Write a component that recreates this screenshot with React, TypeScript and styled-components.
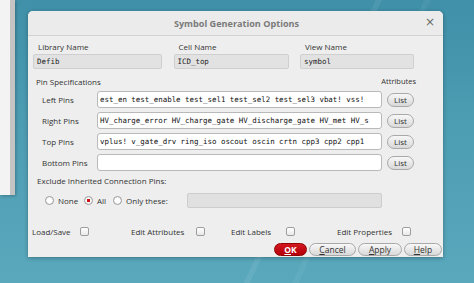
import React from "react";
import styled, { createGlobalStyle } from "styled-components";

const Global = createGlobalStyle`
  html, body { margin: 0; padding: 0; }
  body {
    width: 474px; height: 283px; overflow: hidden;
    font-family: "Open Sans", "Noto Sans", sans-serif;
  }
`;

const Desktop = styled.div`
  position: relative;
  width: 474px;
  height: 283px;
  overflow: hidden;
  background:
    linear-gradient(115deg, transparent 0 62%, rgba(255,255,255,0.07) 62% 63%, transparent 63% 70%, rgba(255,255,255,0.05) 70% 71%, transparent 71%),
    linear-gradient(180deg, #3f90a8 0%, #4d9db3 45%, #5aa8bc 100%);
`;

const BackWindow = styled.div`
  position: absolute;
  left: 0; top: 0;
  width: 10px; height: 195px;
  background: #f3f3f3;
  border-right: 5px solid #c4c4c4;
  box-shadow: 1px 1px 3px rgba(0,0,0,0.25);
`;

const Dialog = styled.div`
  position: absolute;
  left: 28px; top: 11px;
  width: 415px; height: 246px;
  background: #eeeeee;
  border-radius: 5px 5px 0 0;
  box-shadow: 0 1px 4px rgba(0,0,0,0.3);
  display: flex;
  flex-direction: column;
`;

const TitleBar = styled.div`
  position: relative;
  height: 24px;
  border-bottom: 1px solid #d2d2d2;
  display: flex;
  align-items: center;
  justify-content: center;
  background: #ebebeb;
  border-radius: 5px 5px 0 0;
`;

const Title = styled.span`
  font-weight: 700;
  font-size: 9.1px;
  color: #7a7a7a;
  margin-left: 2px;
`;

const Close = styled.span`
  position: absolute;
  right: 8px; top: 4px;
  font-size: 12px;
  color: #6a6a6a;
  font-family: "DejaVu Sans", sans-serif;
`;

const Body = styled.div`
  padding: 5px 29px 0 5px;
  display: flex;
  flex-direction: column;
`;

const NameRow = styled.div`
  display: flex;
  justify-content: space-between;
`;

const NameField = styled.div<{ $w: number }>`
  width: ${(p) => p.$w}px;
  display: flex;
  flex-direction: column;
  gap: 2px;
`;

const Label = styled.span<{ $size?: number }>`
  font-size: ${(p) => p.$size ?? 8}px;
  line-height: 11px;
  color: #333;
  white-space: nowrap;
`;

const NameLabel = styled(Label)`
  padding-left: 5px;
`;

const ReadOnlyInput = styled.div`
  height: 13px;
  background: #e2e2e2;
  border: 1px solid #cfcfcf;
  border-radius: 2px;
  font-family: "DejaVu Sans Mono", monospace;
  font-size: 7.45px;
  line-height: 13px;
  color: #222;
  padding-left: 3px;
`;

const SpecHeader = styled.div`
  margin-top: 7px;
  display: flex;
  justify-content: space-between;
  padding-left: 3px;
  margin-right: -2px;
`;

const PinList = styled.div`
  margin-top: 4px;
  display: flex;
  flex-direction: column;
  gap: 4px;
`;

const PinRow = styled.div`
  display: grid;
  grid-template-columns: 50px 285px 27px;
  column-gap: 5px;
  align-items: center;
  padding-left: 9px;
`;

const PinInput = styled.div`
  height: 15px;
  background: #fff;
  border: 1px solid #b9b9b9;
  border-radius: 3px;
  font-family: "DejaVu Sans Mono", monospace;
  font-size: 7.45px;
  line-height: 15px;
  color: #111;
  padding-left: 2px;
  white-space: nowrap;
  overflow: hidden;
`;

const ListButton = styled.button`
  height: 14px;
  width: 27px;
  padding: 0;
  border: 1px solid #a9a9a9;
  border-radius: 7px;
  background: linear-gradient(#f7f7f7, #d9d9d9);
  font-family: "Open Sans", sans-serif;
  font-size: 8px;
  color: #333;
  line-height: 12px;
`;

const Exclude = styled(Label)`
  margin-top: 4px;
  padding-left: 4px;
`;

const RadioRow = styled.div`
  margin-top: 6px;
  display: flex;
  align-items: center;
  padding-left: 12px;
  height: 17px;
`;

const RadioItem = styled.label<{ $w: number }>`
  display: flex;
  align-items: center;
  gap: 4px;
  width: ${(p) => p.$w}px;
`;

const Radio = styled.span<{ $on?: boolean }>`
  width: 7px; height: 7px;
  border-radius: 50%;
  border: 1px solid #9c9c9c;
  background: radial-gradient(circle, ${(p) => (p.$on ? "#d01010 0 1.6px, #fff 2px" : "#fff 0 2px")}, #e6e6e6);
  display: inline-block;
  flex: none;
`;

const DisabledInput = styled.div`
  margin-left: auto;
  margin-right: 32px;
  width: 195px;
  height: 15px;
  background: #e0e0e0;
  border: 1px solid #cdcdcd;
  border-radius: 2px;
  box-sizing: border-box;
`;

const CheckRow = styled.div`
  margin-top: 17px;
  display: flex;
  align-items: center;
  margin-left: -1px;
`;

const CheckItem = styled.div<{ $w: number; $ml: number }>`
  display: flex;
  align-items: center;
  justify-content: space-between;
  width: ${(p) => p.$w}px;
  margin-left: ${(p) => p.$ml}px;
`;

const CheckBox = styled.span`
  width: 7px; height: 7px;
  border: 1px solid #9d9d9d;
  border-radius: 2px;
  background: linear-gradient(#fff, #e8e8e8);
  display: inline-block;
`;

const ButtonRow = styled.div`
  margin-top: auto;
  display: flex;
  justify-content: flex-end;
  gap: 2px;
  padding: 0 1px 1px 0;
`;

const ActionButton = styled.button<{ $w: number; $primary?: boolean }>`
  width: ${(p) => p.$w}px;
  height: 13px;
  padding: 0;
  border-radius: 7px;
  border: 1px solid ${(p) => (p.$primary ? "#8f0000" : "#a8a8a8")};
  background: ${(p) => (p.$primary ? "linear-gradient(#d41620, #b4000a)" : "linear-gradient(#f8f8f8, #d8d8d8)")};
  color: ${(p) => (p.$primary ? "#fff" : "#333")};
  font-family: "Open Sans", sans-serif;
  font-size: 8.5px;
  font-weight: ${(p) => (p.$primary ? 700 : 400)};
  line-height: 11px;
  u { text-decoration: underline; }
`;

const pins = [
  { label: "Left Pins", value: "est_en test_enable test_sel1 test_sel2 test_sel3 vbat! vss!" },
  { label: "Right Pins", value: "HV_charge_error HV_charge_gate HV_discharge_gate HV_met HV_s" },
  { label: "Top Pins", value: "vplus! v_gate_drv ring_iso oscout oscin crtn cpp3 cpp2 cpp1" },
  { label: "Bottom Pins", value: "" },
];

const checks = [
  { label: "Load/Save", w: 57, ml: 0 },
  { label: "Edit Attributes", w: 74, ml: 42 },
  { label: "Edit Labels", w: 64, ml: 26 },
  { label: "Edit Properties", w: 74, ml: 42 },
];

export default function App() {
  return (
    <Desktop>
      <Global />
      <BackWindow />
      <Dialog>
        <TitleBar>
          <Title>Symbol Generation Options</Title>
          <Close>×</Close>
        </TitleBar>
        <Body>
          <NameRow>
            <NameField $w={129}>
              <NameLabel>Library Name</NameLabel>
              <ReadOnlyInput>Defib</ReadOnlyInput>
            </NameField>
            <NameField $w={115}>
              <NameLabel>Cell Name</NameLabel>
              <ReadOnlyInput>ICD_top</ReadOnlyInput>
            </NameField>
            <NameField $w={114}>
              <NameLabel>View Name</NameLabel>
              <ReadOnlyInput>symbol</ReadOnlyInput>
            </NameField>
          </NameRow>
          <SpecHeader>
            <Label>Pin Specifications</Label>
            <Label $size={7.5}>Attributes</Label>
          </SpecHeader>
          <PinList>
            {pins.map((p) => (
              <PinRow key={p.label}>
                <Label>{p.label}</Label>
                <PinInput>{p.value}</PinInput>
                <ListButton>List</ListButton>
              </PinRow>
            ))}
          </PinList>
          <Exclude>Exclude Inherited Connection Pins:</Exclude>
          <RadioRow>
            <RadioItem $w={39}>
              <Radio />
              <Label>None</Label>
            </RadioItem>
            <RadioItem $w={29}>
              <Radio $on />
              <Label>All</Label>
            </RadioItem>
            <RadioItem $w={60}>
              <Radio />
              <Label>Only these:</Label>
            </RadioItem>
            <DisabledInput />
          </RadioRow>
          <CheckRow>
            {checks.map((c) => (
              <CheckItem key={c.label} $w={c.w} $ml={c.ml}>
                <Label>{c.label}</Label>
                <CheckBox />
              </CheckItem>
            ))}
          </CheckRow>
        </Body>
        <ButtonRow>
          <ActionButton $w={33} $primary><u>O</u>K</ActionButton>
          <ActionButton $w={47}><u>C</u>ancel</ActionButton>
          <ActionButton $w={44}><u>A</u>pply</ActionButton>
          <ActionButton $w={38}><u>H</u>elp</ActionButton>
        </ButtonRow>
      </Dialog>
    </Desktop>
  );
}
